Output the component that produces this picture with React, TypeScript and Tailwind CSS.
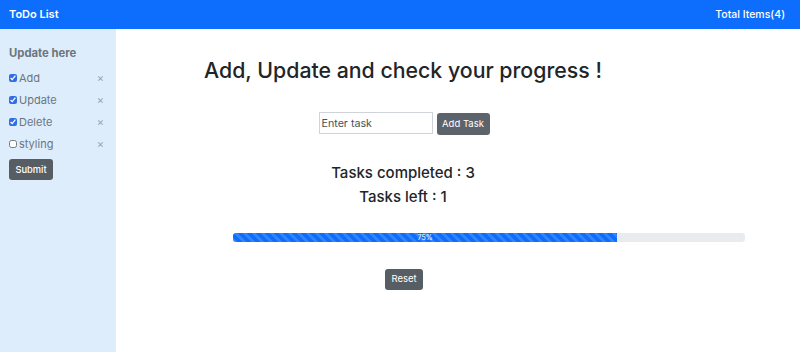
import { useState } from 'react'

type Item = { label: string; done: boolean }

const ITEMS: Item[] = [
  { label: 'Add', done: true },
  { label: 'Update', done: true },
  { label: 'Delete', done: true },
  { label: 'styling', done: false },
]

export default function App() {
  const [items, setItems] = useState(ITEMS)
  const completed = items.filter((i) => i.done).length
  const pct = Math.round((completed / items.length) * 100)

  function toggle(idx: number) {
    setItems((list) => list.map((it, i) => (i === idx ? { ...it, done: !it.done } : it)))
  }

  return (
    <div className="h-[352px] w-[800px] flex flex-col bg-white font-['Inter',sans-serif] text-[#212529]">
      <nav className="h-[29px] shrink-0 flex items-center justify-between bg-[#0d6efd] px-[9px] text-white">
        <span className="text-[11px] font-semibold">ToDo List</span>
        <span className="pr-[6px] text-[10.5px] font-medium">Total Items({items.length})</span>
      </nav>

      <div className="flex flex-1 min-w-0">
        {/* sidebar */}
        <aside className="w-[116px] shrink-0 bg-[#deedfc] px-[9px] pt-[17px]">
          <h6 className="text-[11.3px] font-bold leading-[14px] text-[#6c757d]">Update here</h6>
          <ul className="mt-[7px] flex flex-col">
            {items.map((it, i) => (
              <li key={it.label} className="flex h-[22px] items-center justify-between text-[11px] text-[#6c757d]">
                <label className="flex items-center gap-[2px]">
                  <input
                    type="checkbox"
                    checked={it.done}
                    onChange={() => toggle(i)}
                    className="h-[8px] w-[8px] accent-[#2f6fe0]"
                  />
                  {it.label}
                </label>
                <span className="pr-[3px] text-[11px] text-[#9aa3ab]">×</span>
              </li>
            ))}
          </ul>
          <button className="mt-[3px] h-[21px] w-[44px] rounded-[3px] bg-[#565e64] text-[9.3px] font-medium text-white">
            Submit
          </button>
        </aside>

        {/* main */}
        <main className="flex min-w-0 flex-1 flex-col pt-[27px]">
          <div className="flex flex-col items-center pl-[2px] pr-[112px]">
            <h2 className="text-[21.3px] font-medium leading-[28px]">Add, Update and check your progress !</h2>

            <div className="mt-[27px] flex items-center gap-[4px] pl-[2px]">
              <input
                placeholder="Enter task"
                className="h-[22px] w-[114px] border border-[#ced4da] px-[2px] text-[10.7px] text-[#212529] placeholder:text-[#495057] outline-none"
              />
              <button className="mt-[2px] h-[22px] w-[53px] rounded-[3px] bg-[#5c636a] text-[9.5px] text-white">
                Add Task
              </button>
            </div>

            <div className="mt-[26px] text-center text-[15px] font-medium leading-[24px]">
              <p>Tasks completed : {completed}</p>
              <p>Tasks left : {items.length - completed}</p>
            </div>
          </div>

          <div className="mt-[24px] ml-[117px] h-[9px] w-[512px] overflow-hidden rounded-[3px] bg-[#e9ecef]">
            <div
              className="flex h-full items-center justify-center bg-[#0d6efd] bg-[linear-gradient(45deg,rgba(255,255,255,0.15)_25%,transparent_25%,transparent_50%,rgba(255,255,255,0.15)_50%,rgba(255,255,255,0.15)_75%,transparent_75%,transparent)] bg-[length:9px_9px] text-[7px] leading-none text-white"
              style={{ width: `${pct}%` }}
            >
              {pct}%
            </div>
          </div>

          <div className="flex justify-center pl-[4px] pr-[112px]">
            <button className="mt-[27px] h-[21px] w-[38px] rounded-[3px] bg-[#565e64] text-[9.5px] text-white">
              Reset
            </button>
          </div>
        </main>
      </div>
    </div>
  )
}
